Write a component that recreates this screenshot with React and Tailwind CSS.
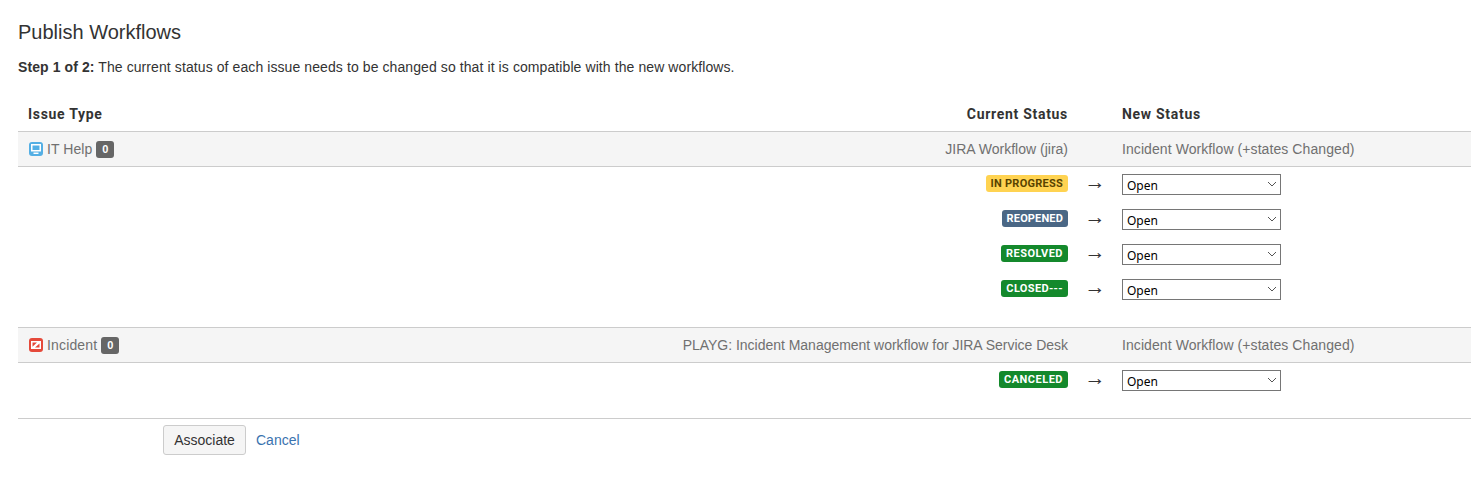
import React from "react";

const Row = ({ label, cls }) => (
  <div className="grid grid-cols-[1fr_34px_359px] h-[35px] items-center">
    <div className="flex justify-end pr-[10px] -mt-[2px]">
      <span className={`h-[17px] leading-[17px] px-[5px] rounded-[3px] text-[11px] font-bold whitespace-nowrap font-['Roboto',sans-serif] ${cls}`}>{label}</span>
    </div>
    <div className="text-center text-[21px] leading-[21px] -mt-[7px] text-[#333333]">→</div>
    <div className="pl-[10px]">
      <div className="relative w-[159px] h-[21px] border border-[#767676] bg-white flex items-center pl-[4px] pt-[2px] text-[12px] text-black font-['Noto_Sans',sans-serif]">
        Open
        <svg className="absolute right-[3px] top-[6px]" width="10" height="6" viewBox="0 0 10 6" fill="none" stroke="#555" strokeWidth="1"><path d="M1 1l4 4 4-4" /></svg>
      </div>
    </div>
  </div>
);

const Group = ({ icon, name, current, color, nameCls, curCls }) => (
  <div className="grid grid-cols-[1fr_34px_359px] h-[35px] items-center bg-[#f5f5f5] border-b border-[#cccccc] text-[#707070]">
    <div className="flex justify-between pl-[11px] pr-[10px]">
      <div className="flex items-center">
        <span className={`w-[14px] h-[14px] rounded-[3px] flex items-center justify-center ${color}`}>{icon}</span>
        <span className={`ml-[4px] ${nameCls}`}>{name}</span>
        <span className="ml-[4px] w-[18px] h-[17px] rounded-[3px] bg-[#666666] text-white text-[11px] font-bold flex items-center justify-center">0</span>
      </div>
      <span className={curCls}>{current}</span>
    </div>
    <div />
    <div className="pl-[10px] tracking-[0.08px]">Incident Workflow (+states Changed)</div>
  </div>
);

const Monitor = (
  <svg width="10" height="10" viewBox="0 0 10 10" fill="white"><path fillRule="evenodd" d="M0 0h10v7.5H0zM1.5 1.5v4.5h7V1.5zM2.5 8.5h5v1.5h-5z" /></svg>
);
const Pic = (
  <svg width="10" height="8" viewBox="0 0 10 8" fill="white"><path fillRule="evenodd" d="M0 0h10v8H0zM1.5 1.5v4.2L6 1.5zM8.5 2.5L4 6.5h4.5z" /></svg>
);

export default function App() {
  return (
    <div className="bg-white h-[489px] w-[1471px] overflow-hidden pl-[18px] pt-[20px] text-[14px] leading-[20px] text-[#333333] font-['Liberation_Sans',Arial,sans-serif]">
      <h1 className="text-[20px] leading-[24px] font-normal">Publish Workflows</h1>
      <p className="mt-[13px] tracking-[0.09px]"><b>Step 1 of 2:</b> The current status of each issue needs to be changed so that it is compatible with the new workflows.</p>
      <div className="mt-[20px] grid grid-cols-[1fr_34px_359px] h-[35px] items-center border-b border-[#cccccc] font-bold tracking-[0.7px] font-['Roboto',sans-serif]">
        <div className="flex justify-between pl-[10px] pr-[10px]"><span>Issue Type</span><span>Current Status</span></div>
        <div />
        <div className="pl-[10px]">New Status</div>
      </div>
      <Group icon={Monitor} name="IT Help" current="JIRA Workflow (jira)" color="bg-[#54afe4]" nameCls="tracking-[0.05px]" curCls="" />
      <Row label="IN PROGRESS" cls="tracking-[0.25px] bg-[#ffd351] text-[#594300]" />
      <Row label="REOPENED" cls="tracking-[0.15px] bg-[#4a6785] text-white" />
      <Row label="RESOLVED" cls="tracking-[0.5px] bg-[#14892c] text-white" />
      <Row label="CLOSED---" cls="tracking-[0.35px] bg-[#14892c] text-white" />
      <div className="h-[21px] border-b border-[#cccccc]" />
      <Group icon={Pic} name="Incident" current="PLAYG: Incident Management workflow for JIRA Service Desk" color="bg-[#e5493a]" nameCls="tracking-[0.15px]" curCls="tracking-[-0.02px]" />
      <Row label="CANCELED" cls="tracking-[0.5px] bg-[#14892c] text-white" />
      <div className="mt-[20px] border-t border-[#cccccc] pl-[145px] pt-[6px] flex items-center">
        <button className="w-[83px] h-[30px] border border-[#cccccc] rounded-[3px] bg-[#f5f5f5] text-[#333333]">Associate</button>
        <a className="ml-[10px] text-[#3b73af]">Cancel</a>
      </div>
    </div>
  );
}
